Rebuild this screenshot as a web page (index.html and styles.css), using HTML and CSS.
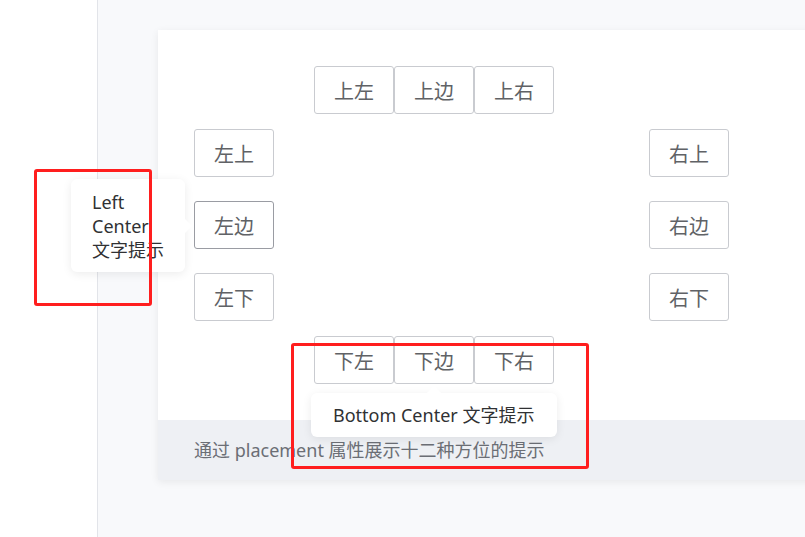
FILE: index.html
```html
<!DOCTYPE html>
<html lang="zh-CN">
<head>
    <meta charset="UTF-8">
    <title>Tooltip placement</title>
    <link rel="stylesheet" href="styles.css">
</head>
<body>
    <div class="layout">
        <aside class="sidebar"></aside>
        <main class="main">
            <div class="card">
                <div class="demo">
                    <div class="row row-edge">
                        <button class="btn">上左</button>
                        <button class="btn">上边</button>
                        <button class="btn">上右</button>
                    </div>
                    <div class="middle">
                        <div class="col">
                            <button class="btn">左上</button>
                            <button class="btn btn-hover">左边</button>
                            <button class="btn">左下</button>
                        </div>
                        <div class="col">
                            <button class="btn">右上</button>
                            <button class="btn">右边</button>
                            <button class="btn">右下</button>
                        </div>
                    </div>
                    <div class="row row-edge">
                        <button class="btn">下左</button>
                        <button class="btn">下边</button>
                        <button class="btn">下右</button>
                    </div>
                </div>
                <div class="card-footer">通过 placement 属性展示十二种方位的提示</div>
            </div>
        </main>
    </div>

    <div class="tip tip-left">Left<br>Center<br>文字提示</div>
    <div class="tip tip-bottom">Bottom Center 文字提示</div>

    <div class="mark mark-left"></div>
    <div class="mark mark-bottom"></div>
</body>
</html>
```

FILE: styles.css
```css
body { margin: 0; font-family: "Noto Sans", "Noto Sans CJK SC", sans-serif; background: #fff; }
.layout { display: flex; height: 537px; overflow: hidden; }
.sidebar { width: 97px; flex-shrink: 0; background: #fff; border-right: 1px solid #e2e4e9; }
.main { flex: 1; background: #f8f9fb; padding-top: 30px; padding-left: 60px; }
.card { background: #fff; box-shadow: 0 2px 8px rgba(0, 0, 0, 0.07); width: 700px; }
.demo { padding: 36px; }
.row { display: flex; }
.row-edge { margin-left: 120px; }
.middle { display: flex; justify-content: space-between; width: 535px; margin: 15px 0; }
.col { display: flex; flex-direction: column; gap: 24px; }
.btn {
    width: 80px;
    height: 48px;
    padding: 0;
    font-family: "Noto Sans CJK SC", sans-serif;
    font-size: 20px;
    color: #606266;
    background: #fff;
    border: 1px solid #c9cbd0;
    border-radius: 3px;
    cursor: pointer;
}
.btn-hover { border-color: #9a9ca3; }
.card-footer {
    height: 60px;
    line-height: 60px;
    padding-left: 36px;
    background: #eef0f4;
    color: #6b6e75;
    font-size: 18px;
}

.tip {
    position: absolute;
    background: #fff;
    color: #303133;
    font-size: 18px;
    line-height: 24px;
    border-radius: 6px;
    box-shadow: 0 2px 10px rgba(0, 0, 0, 0.08);
    white-space: nowrap;
}
.tip::after {
    content: "";
    position: absolute;
    width: 10px;
    height: 10px;
    background: #fff;
    transform: rotate(45deg);
}
.tip-left { left: 71px; top: 179px; width: 93px; height: 72px; padding: 11px 0 10px 21px; }
.tip-left::after { right: -5px; top: 42px; }
.tip-bottom { left: 311px; top: 393px; width: 224px; height: 24px; padding: 10px 0 10px 22px; }
.tip-bottom::after { left: 118px; top: -5px; }

.mark { position: absolute; border: 3px solid #ff1e1e; border-radius: 3px; }
.mark-left { left: 34px; top: 169px; width: 112px; height: 131px; }
.mark-bottom { left: 291px; top: 343px; width: 292px; height: 120px; }
```
